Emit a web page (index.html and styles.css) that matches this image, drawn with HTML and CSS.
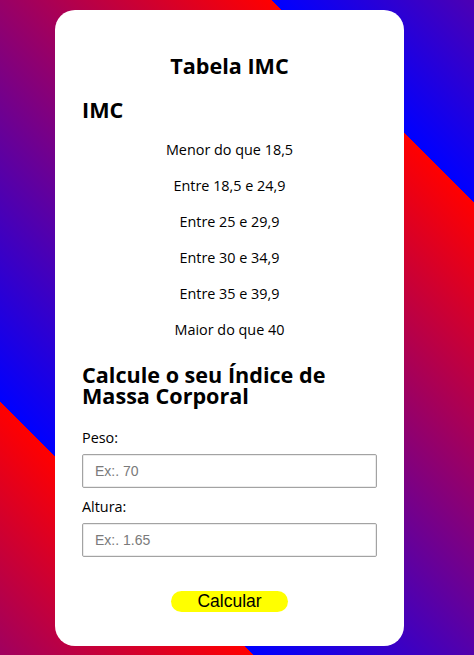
FILE: index.html
```html
<!DOCTYPE html>
<html lang="pt-BR">
<head>
<meta charset="utf-8">
<title>Tabela IMC</title>
<link rel="stylesheet" href="styles.css">
</head>
<body>
<main class="card">
  <h1 class="title">Tabela IMC</h1>
  <h2 class="heading">IMC</h2>
  <div class="ranges">
    <p class="range">Menor do que 18,5</p>
    <p class="range">Entre 18,5 e 24,9</p>
    <p class="range">Entre 25 e 29,9</p>
    <p class="range">Entre 30 e 34,9</p>
    <p class="range">Entre 35 e 39,9</p>
    <p class="range">Maior do que 40</p>
  </div>
  <h2 class="heading calc-heading">Calcule o seu Índice de Massa Corporal</h2>
  <form class="form">
    <label class="label" for="peso">Peso:</label>
    <input class="field" id="peso" type="text" placeholder="Ex:. 70">
    <label class="label label-second" for="altura">Altura:</label>
    <input class="field" id="altura" type="text" placeholder="Ex:. 1.65">
    <div class="actions">
      <button class="btn" type="button">Calcular</button>
    </div>
  </form>
</main>
</body>
</html>
```
FILE: styles.css
```css
html {
  height: 100%;
}
body {
  margin: 0;
  min-height: 100%;
  font-family: "Open Sans", "Noto Sans", sans-serif;
  color: #000;
  background: repeating-linear-gradient(45deg, #0000ff 179px, #ff0000 655px);
  display: flex;
  flex-direction: column;
  align-items: flex-start;
}
.card {
  box-sizing: border-box;
  width: 349px;
  height: 636px;
  margin: 10px 0 9px 55px;
  padding: 42px 27px 0 27px;
  background: #fff;
  border-radius: 20px;
  display: flex;
  flex-direction: column;
}
.title {
  margin: 0;
  font-size: 21.6px;
  line-height: 28px;
  font-weight: 700;
  text-align: center;
}
.heading {
  margin: 16px 0 0;
  font-size: 21.6px;
  line-height: 28px;
  font-weight: 700;
}
.ranges {
  margin-top: 16px;
  display: flex;
  flex-direction: column;
  gap: 16px;
}
.range {
  margin: 0;
  font-size: 14.4px;
  line-height: 20px;
  text-align: center;
}
.calc-heading {
  margin-top: 24px;
  line-height: 21px;
}
.form {
  margin-top: 22px;
  display: flex;
  flex-direction: column;
}
.label {
  font-size: 14.4px;
  line-height: 20px;
  margin-bottom: 5.5px;
}
.label-second {
  margin-top: 9.5px;
  margin-bottom: 6px;
}
.field {
  box-sizing: border-box;
  width: 100%;
  height: 34px;
  margin: 0;
  padding: 0 12px;
  border: 1px solid #a3a3a3;
  border-radius: 2px;
  box-shadow: inset 0 0 0 1px #ececec;
  font-family: "Liberation Sans", Arial, sans-serif;
  font-size: 14px;
  color: #000;
  background: #fff;
}
.field::placeholder {
  color: #7a7a7a;
}
.actions {
  margin-top: 33.5px;
  display: flex;
  justify-content: center;
}
.btn {
  height: 21px;
  width: 117px;
  padding: 0;
  border: none;
  border-radius: 11px;
  background: #ffff00;
  font-family: "Liberation Sans", Arial, sans-serif;
  font-size: 17.5px;
  line-height: 21px;
  color: #000;
}
```
